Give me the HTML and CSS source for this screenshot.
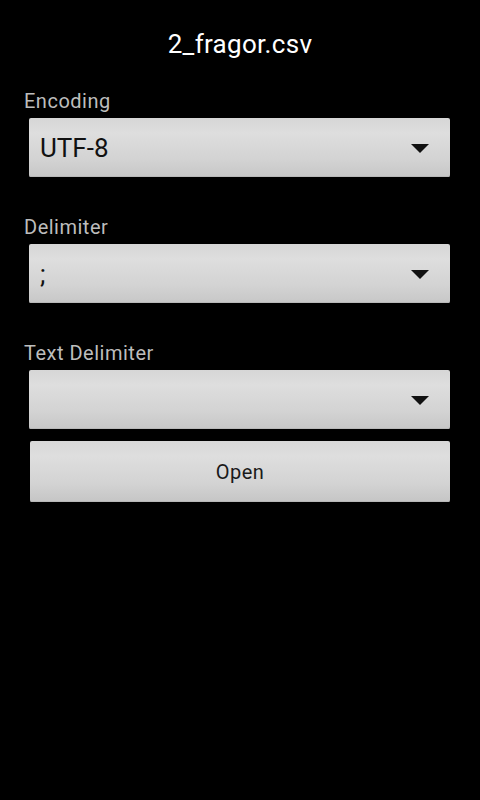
FILE: index.html
```html
<!DOCTYPE html>
<html lang="en">
<head>
    <meta charset="UTF-8">
    <meta name="viewport" content="width=device-width, initial-scale=1.0">
    <title>2_fragor.csv</title>
    <link rel="stylesheet" href="styles.css">
</head>
<body>
    <h1 class="file-title">2_fragor.csv</h1>

    <div class="field">
        <label class="field-label">Encoding</label>
        <div class="spinner">
            <span class="spinner-value">UTF-8</span>
            <span class="spinner-arrow"></span>
        </div>
    </div>

    <div class="field">
        <label class="field-label">Delimiter</label>
        <div class="spinner">
            <span class="spinner-value">;</span>
            <span class="spinner-arrow"></span>
        </div>
    </div>

    <div class="field">
        <label class="field-label">Text Delimiter</label>
        <div class="spinner">
            <span class="spinner-value"></span>
            <span class="spinner-arrow"></span>
        </div>
    </div>

    <button class="open-btn">Open</button>
</body>
</html>
```
FILE: styles.css
```css
/* Reset */
* {
    margin: 0;
    padding: 0;
    box-sizing: border-box;
}

body {
    font-family: Roboto, 'Noto Sans', sans-serif;
    background-color: #000;
    color: #fff;
    width: 480px;
    height: 800px;
    padding: 29px 30px 0 29px;
    display: flex;
    flex-direction: column;
}

.file-title {
    font-size: 26px;
    font-weight: normal;
    line-height: 30px;
    letter-spacing: 0.3px;
    text-align: center;
    margin-bottom: 30px;
    padding-left: 1px;
}

.field {
    display: flex;
    flex-direction: column;
    margin-bottom: 38px;
}

.field:nth-of-type(3) {
    margin-bottom: 12px;
}

.field-label {
    font-size: 20px;
    line-height: 24px;
    letter-spacing: 0.5px;
    color: #bdbdbd;
    margin-left: -5px;
    margin-bottom: 5px;
}

/* Holo-style spinner box */
.spinner {
    height: 59px;
    display: flex;
    align-items: center;
    justify-content: space-between;
    padding: 0 21px 0 11px;
    border-radius: 2px;
    background: linear-gradient(to bottom, #d6d6d6 0%, #dedede 25%, #d3d3d3 70%, #c7c7c7 100%);
    box-shadow: inset 0 -1px 0 #b8b8b8;
}

.spinner-value {
    font-size: 26px;
    line-height: 30px;
    color: #111;
}

.spinner-arrow {
    width: 0;
    height: 0;
    border-left: 9px solid transparent;
    border-right: 9px solid transparent;
    border-top: 9px solid #111;
    margin-top: 2px;
}

.open-btn {
    height: 61px;
    margin-left: 1px;
    font-family: Roboto, 'Noto Sans', sans-serif;
    font-size: 20px;
    letter-spacing: 0.5px;
    color: #1a1a1a;
    border: none;
    border-radius: 2px;
    background: linear-gradient(to bottom, #d8d8d8 0%, #dedede 25%, #d3d3d3 70%, #c5c5c5 100%);
    box-shadow: inset 0 -1px 0 #b8b8b8;
    cursor: pointer;
}
```
